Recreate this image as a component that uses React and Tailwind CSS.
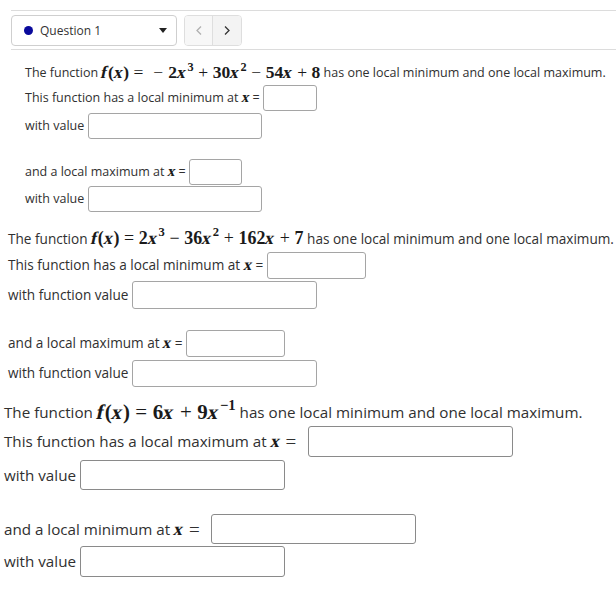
import React from 'react';

const Box = ({ w, h, dark }) => (
  <span
    className={`inline-block shrink-0 rounded-[3px] border bg-white ${dark ? 'border-[#8a8a8a]' : 'border-[#a5a5a5]'}`}
    style={{ width: w, height: h }}
  />
);

// math run, bold serif like the MathJax output
const M = ({ size, children }) => (
  <span className={`font-['Liberation_Serif'] font-bold leading-none text-[#1a1a1a] ${size}`}>{children}</span>
);
// no serif italic face installed, so slant the upright one
const V = ({ children }) => <span className="inline-block -skew-x-12 mr-[0.04em]">{children}</span>;
const Op = ({ children }) => <span className="mx-[0.26em] font-normal">{children}</span>;
const Sup = ({ children }) => <sup className="text-[0.7em] -top-[0.6em] ml-[1px]">{children}</sup>;
const X = () => <span className="inline-block -skew-x-12 font-['Liberation_Serif'] font-bold text-[1.2em] leading-none text-[#1a1a1a]">x</span>;

function Row({ mt, h, children }) {
  return (
    <div className={`flex items-center whitespace-nowrap ${mt}`} style={{ height: h }}>
      {children}
    </div>
  );
}

export default function App() {
  return (
    <div className="w-[616px] h-[596px] bg-white text-[#303030] font-['Open_Sans'] overflow-hidden">
      {/* header */}
      <div className="ml-[11px] mt-[10px] border-t border-b border-[#dcdcdc] pt-[4px] pb-[3px]">
        <div className="flex items-center gap-[7px]">
          <div className="flex h-[31px] w-[166px] items-center rounded-[4px] border border-[#cfcfcf] pl-[12px] pr-[9px]">
            <span className="h-[9px] w-[9px] rounded-full bg-[#0a0a9c]" />
            <span className="ml-[7px] text-[12px] text-[#333]">Question 1</span>
            <svg className="ml-auto" width="8" height="5" viewBox="0 0 8 5"><path d="M0 0h8L4 5z" fill="#222" /></svg>
          </div>
          <div className="flex h-[31px] overflow-hidden rounded-[4px] border border-[#dedede]">
            <div className="flex w-[28px] items-center justify-center bg-[#f7f7f7] border-r border-[#dedede]">
              <svg width="6" height="9" viewBox="0 0 6 9"><path d="M5 0.5L1 4.5L5 8.5" fill="none" stroke="#b0b0b0" strokeWidth="1.3" /></svg>
            </div>
            <div className="flex w-[28px] items-center justify-center bg-[#f3f3f3]">
              <svg width="6" height="9" viewBox="0 0 6 9"><path d="M1 0.5L5 4.5L1 8.5" fill="none" stroke="#333" strokeWidth="1.3" /></svg>
            </div>
          </div>
        </div>
      </div>

      {/* section 1 */}
      <div className="pl-[25px] text-[12.5px]">
        <Row mt="mt-[13px]" h={20}>
          <span>The function&nbsp;</span>
          <M size="text-[1.4em]">
            <V>f</V>(<V>x</V>)<Op>=</Op><span className="mx-[0.3em] font-normal">−</span>2<V>x</V><Sup>3</Sup><Op>+</Op>30<V>x</V><Sup>2</Sup><Op>−</Op>54<V>x</V><Op>+</Op>8
          </M>
          <span>&nbsp;has one local minimum and one local maximum.</span>
        </Row>
        <Row mt="mt-[2px]" h={26}>
          <span>This function has a local minimum at <X /> =&nbsp;</span>
          <Box w={54} h={26} />
        </Row>
        <Row mt="mt-[2px]" h={26}>
          <span>with value&nbsp;</span>
          <Box w={174} h={26} />
        </Row>
        <Row mt="mt-[20px]" h={26}>
          <span>and a local maximum at <X /> =&nbsp;</span>
          <Box w={53} h={26} />
        </Row>
        <Row mt="mt-[1px]" h={26}>
          <span>with value&nbsp;</span>
          <Box w={174} h={26} />
        </Row>
      </div>

      {/* section 2 */}
      <div className="pl-[8px] text-[13.6px]">
        <Row mt="mt-[17px]" h={20}>
          <span>The function&nbsp;</span>
          <M size="text-[1.32em]">
            <V>f</V>(<V>x</V>)<Op>=</Op>2<V>x</V><Sup>3</Sup><Op>−</Op>36<V>x</V><Sup>2</Sup><Op>+</Op>162<V>x</V><Op>+</Op>7
          </M>
          <span>&nbsp;has one local minimum and one local maximum.</span>
        </Row>
        <Row mt="mt-[3px]" h={27}>
          <span>This function has a local minimum at <X /> =&nbsp;</span>
          <Box w={99} h={27} />
        </Row>
        <Row mt="mt-[2px]" h={28}>
          <span>with function value&nbsp;</span>
          <Box w={185} h={28} />
        </Row>
        <Row mt="mt-[21px]" h={27}>
          <span>and a local maximum at <X /> =&nbsp;</span>
          <Box w={99} h={27} />
        </Row>
        <Row mt="mt-[3px]" h={27}>
          <span>with function value&nbsp;</span>
          <Box w={185} h={27} />
        </Row>
      </div>

      {/* section 3 */}
      <div className="pl-[4px] text-[15.2px]">
        <Row mt="mt-[14px]" h={22}>
          <span>The function&nbsp;</span>
          <M size="text-[1.38em]">
            <V>f</V>(<V>x</V>)<Op>=</Op>6<V>x</V><Op>+</Op>9<V>x</V><Sup>−1</Sup>
          </M>
          <span>&nbsp;has one local minimum and one local maximum.</span>
        </Row>
        <Row mt="mt-[3px]" h={31}>
          <span>This function has a local maximum at&nbsp;</span>
          <X />
          <span className="mx-[0.3em] font-['Liberation_Serif'] text-[1.25em] leading-none">=</span>
          <span className="w-[6px]" />
          <Box w={205} h={31} dark />
        </Row>
        <Row mt="mt-[3px]" h={30}>
          <span>with value&nbsp;</span>
          <Box w={205} h={30} dark />
        </Row>
        <Row mt="mt-[24px]" h={30}>
          <span>and a local minimum at&nbsp;</span>
          <X />
          <span className="mx-[0.3em] font-['Liberation_Serif'] text-[1.25em] leading-none">=</span>
          <span className="w-[6px]" />
          <Box w={205} h={30} dark />
        </Row>
        <Row mt="mt-[2px]" h={31}>
          <span>with value&nbsp;</span>
          <Box w={205} h={31} dark />
        </Row>
      </div>
    </div>
  );
}
